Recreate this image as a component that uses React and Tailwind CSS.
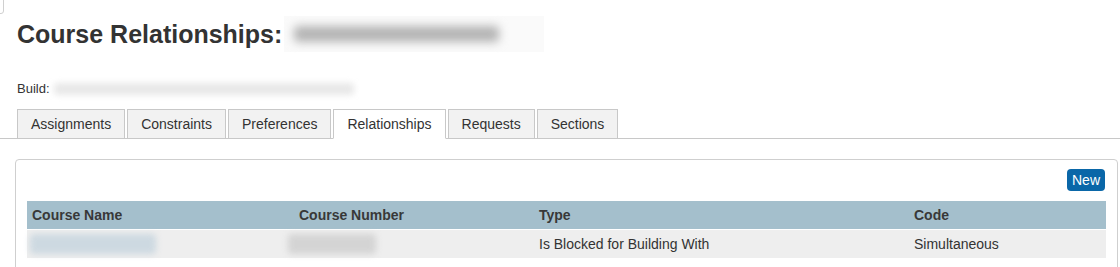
import React from 'react';

// Blurred placeholder for hidden values
const Blur = ({ className }) => (
  <div className={`rounded-sm ${className}`} />
);

const tabs = ['Assignments', 'Constraints', 'Preferences', 'Relationships', 'Requests', 'Sections'];

export default function App() {
  return (
    <div className="relative h-[267px] w-[1120px] overflow-hidden bg-white font-['Liberation_Sans',Arial,sans-serif] text-[#333]">
      {/* cut-off widget in the corner */}
      <div className="absolute -left-[8px] -top-[6px] h-[20px] w-[12px] rounded-[3px] border border-[#d0d0d0]" />

      {/* Title */}
      <div className="flex items-center pl-[17px] pt-[16px]">
        <h1 className="text-[25px] font-bold leading-[36px] text-[#333]">Course Relationships:</h1>
        <div className="ml-[2px] flex h-[36px] w-[260px] items-center bg-[#fafafa] px-[10px]">
          <Blur className="h-[16px] w-[205px] bg-[#b4b4b4] blur-[5px]" />
        </div>
      </div>

      {/* Build */}
      <div className="mt-[29px] flex h-[16px] items-center pl-[17px] text-[13px]">
        <span>Build:</span>
        <Blur className="ml-[4px] h-[12px] w-[300px] bg-[#e8e8e8] blur-[3px]" />
      </div>

      {/* Tabs */}
      <div className="mt-[12px] flex border-b border-[#c8c8c8] pl-[17px]">
        {tabs.map((t) => {
          const active = t === 'Relationships';
          return (
            <div
              key={t}
              className={`-mb-px mr-[2px] flex h-[30px] items-center border border-[#c8c8c8] px-[13px] text-[14px] ${
                active ? 'border-b-white bg-white' : 'bg-[#f2f2f2]'
              }`}
            >
              {t}
            </div>
          );
        })}
      </div>

      {/* Panel */}
      <div className="ml-[15px] mt-[20px] h-[140px] w-[1103px] rounded-[4px] border border-[#cfcfcf] px-[11px] pt-[9px]">
        <div className="flex justify-end pr-[1px]">
          <button className="h-[22px] rounded-[4px] bg-[#0a67a8] px-[5px] text-[14px] leading-[22px] text-white">
            New
          </button>
        </div>
        <div className="mt-[10px]">
          <div className="grid h-[28px] grid-cols-[267px_240px_375px_1fr] items-center bg-[#a4bfcc] text-[14px] font-bold text-[#383838]">
            <div className="pl-[5px]">Course Name</div>
            <div className="pl-[5px]">Course Number</div>
            <div className="pl-[5px]">Type</div>
            <div className="pl-[5px]">Code</div>
          </div>
          <div className="mt-px grid h-[28px] grid-cols-[267px_240px_375px_1fr] items-center bg-[#eeeeee] text-[14px] text-[#333]">
            <div className="pl-[3px]">
              <Blur className="h-[20px] w-[126px] bg-[#cdd9e1] blur-[3px]" />
            </div>
            <div className="-ml-[6px]">
              <Blur className="h-[20px] w-[88px] bg-[#d4d4d4] blur-[3px]" />
            </div>
            <div className="pl-[5px]">Is Blocked for Building With</div>
            <div className="pl-[5px]">Simultaneous</div>
          </div>
        </div>
      </div>
    </div>
  );
}
